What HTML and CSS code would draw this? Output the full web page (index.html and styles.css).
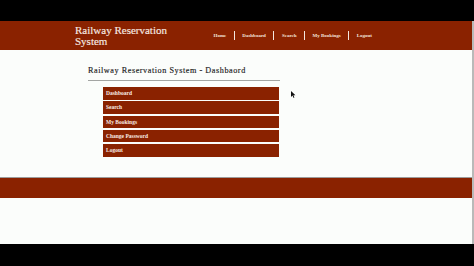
FILE: index.html
```html
<!DOCTYPE html>
<html lang="en">
<head>
<meta charset="utf-8">
<title>Railway Reservation System - Dashboard</title>
<link rel="stylesheet" href="styles.css">
</head>
<body>
<div class="page">
  <header class="topbar">
    <div class="brand">Railway Reservation System</div>
    <nav class="nav">
      <a class="nav-link" href="#">Home</a>
      <a class="nav-link" href="#">Dashboard</a>
      <a class="nav-link" href="#">Search</a>
      <a class="nav-link" href="#">My Bookings</a>
      <a class="nav-link" href="#">Logout</a>
    </nav>
  </header>
  <main class="main">
    <h1 class="title">Railway Reservation System - Dashbaord</h1>
    <ul class="menu">
      <li class="menu-item">Dashboard</li>
      <li class="menu-item">Search</li>
      <li class="menu-item">My Bookings</li>
      <li class="menu-item">Change Password</li>
      <li class="menu-item">Logout</li>
    </ul>
    <svg class="cursor" width="5" height="7" viewBox="0 0 5 7"><path d="M0 0 L0 6 L1.5 4.6 L2.6 7 L3.4 6.6 L2.4 4.3 L4.4 4.3 Z" fill="#111"/></svg>
  </main>
  <footer class="footer"></footer>
  <div class="bottom"></div>
</div>
</body>
</html>
```

FILE: styles.css
```css
html, body {
  margin: 0;
  padding: 0;
}
body {
  background: #000;
  padding-top: 21px;
  height: 266px;
  box-sizing: border-box;
  overflow: hidden;
}
.page {
  height: 223px;
  background: #fbfdfb;
  border-right: 2px solid #b9bab9;
  display: flex;
  flex-direction: column;
}
.topbar {
  height: 29px;
  background: #8a2200;
  display: flex;
  align-items: center;
  padding-left: 75px;
}
.brand {
  width: 100px;
  margin-right: 31px;
  font-family: "Liberation Serif", serif;
  font-size: 11px;
  line-height: 11px;
  color: #f7ebe3;
  padding-top: 1px;
  -webkit-text-stroke: 0.15px #f7ebe3;
}
.nav {
  display: flex;
  align-items: center;
}
.nav-link {
  font-family: "Liberation Serif", serif;
  font-weight: bold;
  font-size: 5px;
  line-height: 9px;
  color: #f3e3da;
  text-decoration: none;
  padding: 0 7.5px;
  border-left: 1px solid #f3e6de;
}
.nav-link:first-child {
  border-left: none;
}
.main {
  position: relative;
  height: 127px;
  padding-left: 88px;
}
.title {
  margin: 0;
  width: 192px;
  padding-top: 16px;
  padding-bottom: 4px;
  border-bottom: 1px solid #a3a5a3;
  font-family: "Liberation Serif", serif;
  font-weight: normal;
  font-size: 8.2px;
  line-height: 10px;
  letter-spacing: 0.55px;
  color: #1c1c1c;
  -webkit-text-stroke: 0.15px #1c1c1c;
}
.menu {
  list-style: none;
  margin: 6px 0 0 15px;
  padding: 0;
  width: 176px;
  display: flex;
  flex-direction: column;
  gap: 1.75px;
}
.menu-item {
  height: 12.5px;
  background: #8a2200;
  color: #f8ece6;
  font-family: "Liberation Serif", serif;
  font-weight: bold;
  font-size: 5.5px;
  line-height: 12.5px;
  padding-left: 3px;
}
.cursor {
  position: absolute;
  left: 291px;
  top: 41px;
}
.footer {
  height: 20px;
  background: #8a2200;
  border-top: 1px solid #9c9c9c;
}
.bottom {
  flex: 1;
}
```
